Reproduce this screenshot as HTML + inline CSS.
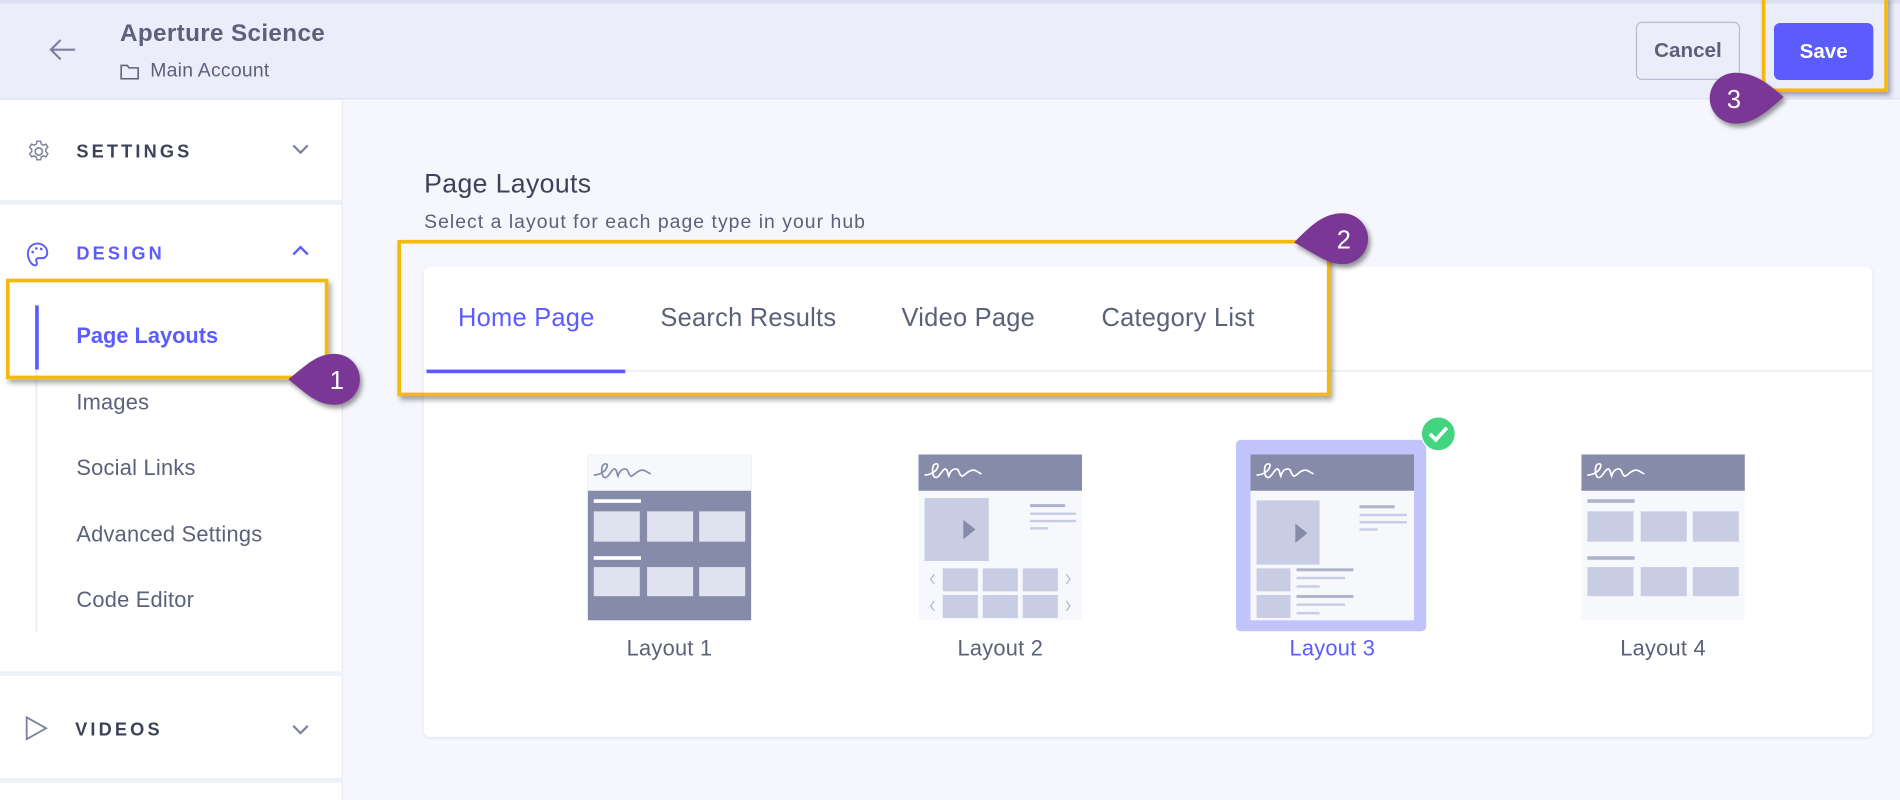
<!DOCTYPE html>
<html><head><meta charset="utf-8">
<style>
*{box-sizing:border-box;margin:0;padding:0}
html,body{width:1900px;height:800px;overflow:hidden;background:#f5f7fd;font-family:"Liberation Sans",sans-serif}
#w{position:absolute;left:0;top:0;width:1568px;height:660px;transform:scale(1.21173);transform-origin:0 0;background:#f5f7fd}
.a{position:absolute}
.hdr{left:0;top:0;width:1568px;height:82px;background:#ecedfa;border-bottom:1px solid #dfe1ee;border-top:3px solid #dcdff0}
.side{left:0;top:83px;width:283px;height:577px;background:#fff;border-right:1px solid #e6e9f3}
.sep{left:0;width:283px;height:4px;background:#eef1f8}
.sec{font-weight:bold;font-size:15px;letter-spacing:2.6px;color:#3d4258}
.item{left:63px;font-size:18px;color:#5b6178;letter-spacing:.2px}
.card{left:350px;top:220px;width:1195px;height:388px;background:#fff;border-radius:5px;box-shadow:0 1px 3px rgba(0,0,0,.08)}
.tab{top:251px;font-size:21px;color:#5b6178;letter-spacing:.2px}
.yb{border:3px solid #f5b90a;box-shadow:2px 3px 4px rgba(0,0,0,.35)}
.lbl{top:525px;font-size:18px;color:#5b6178;text-align:center;width:135px;letter-spacing:.2px}
.th{width:135px;height:137px}
</style></head><body><div id="w">
<div class="a hdr"></div>
<svg class="a" style="left:40px;top:31px" width="24" height="20" viewBox="0 0 24 20"><path d="M22 10H3M10 2L2 10l8 8" fill="none" stroke="#7b819c" stroke-width="1.8"/></svg>
<div class="a" style="left:99px;top:17px;font-size:20px;font-weight:bold;color:#5b6178;letter-spacing:.3px">Aperture Science</div>
<svg class="a" style="left:99px;top:53px" width="16" height="13" viewBox="0 0 16 13"><path d="M1 1h5l1.5 2H15v9H1z" fill="none" stroke="#5b6178" stroke-width="1.3"/></svg>
<div class="a" style="left:124px;top:50px;font-size:16px;color:#5b6178;letter-spacing:.2px">Main Account</div>
<div class="a" style="left:1350px;top:18px;width:86px;height:48px;border:1.5px solid #b8bcd2;border-radius:5px;font-size:17px;font-weight:bold;color:#5b6178;text-align:center;line-height:45px">Cancel</div>
<div class="a" style="left:1464px;top:19px;width:82px;height:47px;background:#5c5cfd;border-radius:5px;font-size:17px;font-weight:bold;color:#fff;text-align:center;line-height:47px">Save</div>
<div class="a yb" style="left:1454px;top:-4px;width:104px;height:80px"></div>

<div class="a side"></div>
<svg class="a" style="left:22px;top:115px" width="20" height="20" viewBox="0 0 20 20"><circle cx="10" cy="10" r="3" fill="none" stroke="#7b819c" stroke-width="1.3"/><path d="M8.5 1.5h3l.5 2.3 1.8 1 2.2-.8 1.5 2.6-1.700 1.6v2l1.7 1.6-1.5 2.6-2.2-.8-1.8 1-.5 2.3h-3l-.5-2.3-1.8-1-2.2.8-1.5-2.6 1.7-1.6v-2L2.5 6.6 4 4l2.2.8 1.8-1z" fill="none" stroke="#7b819c" stroke-width="1.2"/></svg>
<div class="a sec" style="left:63px;top:117px">SETTINGS</div>
<svg class="a" style="left:240px;top:118px" width="16" height="10"><path d="M2 2l6 6 6-6" fill="none" stroke="#7b819c" stroke-width="1.8"/></svg>
<div class="a sep" style="top:165px"></div>
<svg class="a" style="left:21px;top:199px" width="20" height="22" viewBox="0 0 20 22"><path d="M10 2C5 2 2 6 2 10.5S5 20 8 20c2 0 1.5-2.5 1-3.5s0-2.5 2-2.5h3c2.5 0 4-2 4-4.5C18 5.5 14.5 2 10 2z" fill="none" stroke="#5c5cfd" stroke-width="1.6"/><circle cx="6" cy="9" r="1.1" fill="#5c5cfd"/><circle cx="9" cy="6" r="1.1" fill="#5c5cfd"/><circle cx="13" cy="6.5" r="1.1" fill="#5c5cfd"/></svg>
<div class="a sec" style="left:63px;top:201px;color:#5c5cfd">DESIGN</div>
<svg class="a" style="left:240px;top:202px" width="16" height="10"><path d="M2 8l6-6 6 6" fill="none" stroke="#5c5cfd" stroke-width="2"/></svg>
<div class="a" style="left:29px;top:252px;width:2px;height:270px;background:#eef1f8"></div>
<div class="a" style="left:29px;top:252px;width:3px;height:53px;background:#5c5cfd"></div>
<div class="a item" style="top:267px;color:#5c5cfd;font-weight:bold;letter-spacing:0">Page Layouts</div>
<div class="a item" style="top:322px">Images</div>
<div class="a item" style="top:376px">Social Links</div>
<div class="a item" style="top:431px">Advanced Settings</div>
<div class="a item" style="top:485px">Code Editor</div>
<div class="a yb" style="left:5px;top:230px;width:266px;height:83px"></div>
<div class="a sep" style="top:554px"></div>
<svg class="a" style="left:20px;top:590px" width="20" height="22"><path d="M2 2v18l16-9z" fill="none" stroke="#7b819c" stroke-width="1.5"/></svg>
<div class="a sec" style="left:62px;top:594px">VIDEOS</div>
<svg class="a" style="left:240px;top:597px" width="16" height="10"><path d="M2 2l6 6 6-6" fill="none" stroke="#7b819c" stroke-width="1.8"/></svg>
<div class="a sep" style="top:642px"></div>

<div class="a" style="left:350px;top:139px;font-size:22px;color:#3d4258;letter-spacing:.3px">Page Layouts</div>
<div class="a" style="left:350px;top:175px;font-size:16px;color:#5b6178;letter-spacing:.85px">Select a layout for each page type in your hub</div>
<div class="a card"></div>
<div class="a" style="left:350px;top:305px;width:1195px;height:2px;background:#eef1f8"></div>
<div class="a" style="left:352px;top:305px;width:164px;height:3px;background:#5c5cfd"></div>
<div class="a tab" style="left:378px;color:#5c5cfd">Home Page</div>
<div class="a tab" style="left:545px">Search Results</div>
<div class="a tab" style="left:744px">Video Page</div>
<div class="a tab" style="left:909px">Category List</div>
<div class="a yb" style="left:328px;top:198px;width:770px;height:129px"></div>

<!-- Layout 1 -->
<svg class="a th" style="left:485px;top:375px" viewBox="0 0 135 137">
<rect width="135" height="137" fill="#858ba8"/><rect width="135" height="30" fill="#f7f8fc"/>
<path d="M5 17C10 17 15 14 16 10C17 7 13 7 12 10C11 14 12 20 15 19C18 18 19 13 22 12C24 12 24 16 25 18C26 14 28 12 31 12C34 12 33 17 36 18C39 17 41 13 45 13C48 13 49 15 52 16" fill="none" stroke="#858ba8" stroke-width="1.4"/>
<rect x="5" y="37" width="39" height="3" fill="#fff"/>
<rect x="5" y="47" width="38" height="25" fill="#dfe2ef"/><rect x="49" y="47" width="38" height="25" fill="#dfe2ef"/><rect x="92" y="47" width="38" height="25" fill="#dfe2ef"/>
<rect x="5" y="84" width="39" height="3" fill="#fff"/>
<rect x="5" y="93" width="38" height="24" fill="#dfe2ef"/><rect x="49" y="93" width="38" height="24" fill="#dfe2ef"/><rect x="92" y="93" width="38" height="24" fill="#dfe2ef"/>
</svg>
<div class="a lbl" style="left:485px">Layout 1</div>

<!-- Layout 2 -->
<svg class="a th" style="left:758px;top:375px" viewBox="0 0 135 137">
<rect width="135" height="137" fill="#f7f8fc"/><rect width="135" height="30" fill="#858ba8"/>
<path d="M5 17C10 17 15 14 16 10C17 7 13 7 12 10C11 14 12 20 15 19C18 18 19 13 22 12C24 12 24 16 25 18C26 14 28 12 31 12C34 12 33 17 36 18C39 17 41 13 45 13C48 13 49 15 52 16" fill="none" stroke="#fff" stroke-width="1.4"/>
<rect x="5" y="36" width="53" height="52" fill="#c8cde3"/><path d="M37 54l10 8-10 8z" fill="#858ba8"/>
<rect x="92" y="41" width="29" height="2.5" fill="#b0b5cc"/><rect x="92" y="48" width="38" height="2" fill="#c8cde3"/><rect x="92" y="54" width="38" height="2" fill="#c8cde3"/><rect x="92" y="60" width="15" height="2" fill="#c8cde3"/>
<rect x="20" y="94" width="29" height="19" fill="#c8cde3"/><rect x="53" y="94" width="29" height="19" fill="#c8cde3"/><rect x="86" y="94" width="29" height="19" fill="#c8cde3"/>
<rect x="20" y="116" width="29" height="19" fill="#c8cde3"/><rect x="53" y="116" width="29" height="19" fill="#c8cde3"/><rect x="86" y="116" width="29" height="19" fill="#c8cde3"/>
<path d="M13 99l-3 4 3 4M13 121l-3 4 3 4M122 99l3 4-3 4M122 121l3 4-3 4" fill="none" stroke="#b0b5cc" stroke-width="1"/>
</svg>
<div class="a lbl" style="left:758px">Layout 2</div>

<!-- Layout 3 -->
<div class="a" style="left:1020px;top:363px;width:157px;height:158px;background:#c0c4fb;border-radius:4px"></div>
<svg class="a th" style="left:1032px;top:375px" viewBox="0 0 135 137">
<rect width="135" height="137" fill="#f7f8fc"/><rect width="135" height="30" fill="#858ba8"/>
<path d="M5 17C10 17 15 14 16 10C17 7 13 7 12 10C11 14 12 20 15 19C18 18 19 13 22 12C24 12 24 16 25 18C26 14 28 12 31 12C34 12 33 17 36 18C39 17 41 13 45 13C48 13 49 15 52 16" fill="none" stroke="#fff" stroke-width="1.4"/>
<rect x="5" y="38" width="52" height="53" fill="#c8cde3"/><path d="M37 57l10 8-10 8z" fill="#858ba8"/>
<rect x="90" y="42" width="29" height="2.5" fill="#b0b5cc"/><rect x="90" y="49" width="39" height="2" fill="#c8cde3"/><rect x="90" y="55" width="39" height="2" fill="#c8cde3"/><rect x="90" y="61" width="15" height="2" fill="#c8cde3"/>
<rect x="5" y="94" width="28" height="19" fill="#c8cde3"/><rect x="38" y="94" width="47" height="2.5" fill="#b0b5cc"/><rect x="38" y="101" width="40" height="2" fill="#c8cde3"/><rect x="38" y="108" width="19" height="2" fill="#c8cde3"/>
<rect x="5" y="116" width="28" height="19" fill="#c8cde3"/><rect x="38" y="116" width="47" height="2.5" fill="#b0b5cc"/><rect x="38" y="123" width="40" height="2" fill="#c8cde3"/><rect x="38" y="130" width="19" height="2" fill="#c8cde3"/>
</svg>
<svg class="a" style="left:1172px;top:343px" width="30" height="30"><circle cx="15" cy="15" r="14" fill="#42d47f" stroke="#fff" stroke-width="1"/><path d="M8 15l5 5 9-10" fill="none" stroke="#fff" stroke-width="3"/></svg>
<div class="a lbl" style="left:1032px;color:#5c5cfd">Layout 3</div>

<!-- Layout 4 -->
<svg class="a th" style="left:1305px;top:375px" viewBox="0 0 135 137">
<rect width="135" height="137" fill="#f7f8fc"/><rect width="135" height="30" fill="#858ba8"/>
<path d="M5 17C10 17 15 14 16 10C17 7 13 7 12 10C11 14 12 20 15 19C18 18 19 13 22 12C24 12 24 16 25 18C26 14 28 12 31 12C34 12 33 17 36 18C39 17 41 13 45 13C48 13 49 15 52 16" fill="none" stroke="#fff" stroke-width="1.4"/>
<rect x="5" y="37" width="39" height="3" fill="#b0b5cc"/>
<rect x="5" y="47" width="38" height="25" fill="#c8cde3"/><rect x="49" y="47" width="38" height="25" fill="#c8cde3"/><rect x="92" y="47" width="38" height="25" fill="#c8cde3"/>
<rect x="5" y="84" width="39" height="3" fill="#b0b5cc"/>
<rect x="5" y="93" width="38" height="24" fill="#c8cde3"/><rect x="49" y="93" width="38" height="24" fill="#c8cde3"/><rect x="92" y="93" width="38" height="24" fill="#c8cde3"/>
</svg>
<div class="a lbl" style="left:1305px">Layout 4</div>

<!-- callouts -->
<svg class="a" style="left:232px;top:288px;overflow:visible" width="80" height="54"><path d="M6 25C22 12 30 4 44 4a21 21 0 1 1 0 42C30 46 22 38 6 25z" fill="#7a3795" style="filter:drop-shadow(2px 3px 2px rgba(0,0,0,.4))"/><text x="46" y="33" font-family="Liberation Sans" font-size="21" fill="#fff" text-anchor="middle">1</text></svg>
<svg class="a" style="left:1062px;top:172px;overflow:visible" width="80" height="54"><path d="M6 28C20 14 30 4 46 4a21 21 0 1 1 0 42C34 46 24 38 6 28z" fill="#7a3795" style="filter:drop-shadow(2px 3px 2px rgba(0,0,0,.4))"/><text x="47" y="33" font-family="Liberation Sans" font-size="21" fill="#fff" text-anchor="middle">2</text></svg>
<svg class="a" style="left:1398px;top:56px;overflow:visible" width="80" height="54"><path d="M74 24C60 12 50 4 34 4a21 21 0 1 0 0 42C50 46 60 36 74 24z" fill="#7a3795" style="filter:drop-shadow(2px 3px 2px rgba(0,0,0,.4))"/><text x="33" y="33" font-family="Liberation Sans" font-size="21" fill="#fff" text-anchor="middle">3</text></svg>
</div></body></html>
